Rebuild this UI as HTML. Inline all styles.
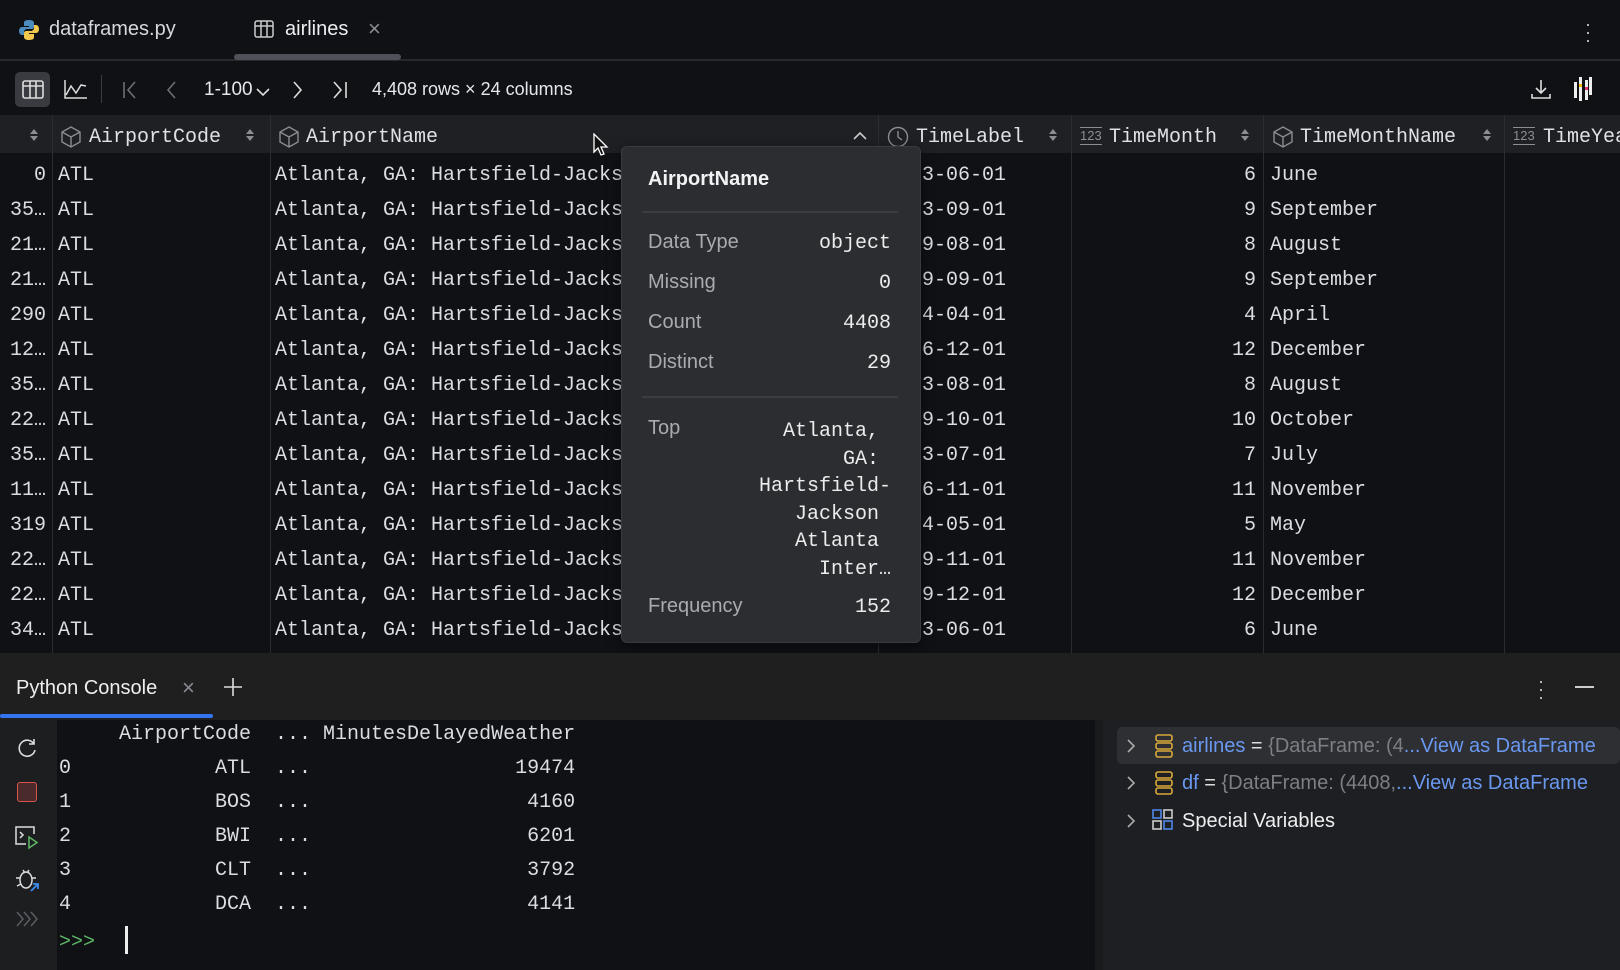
<!DOCTYPE html>
<html><head><meta charset="utf-8"><style>
*{margin:0;padding:0;box-sizing:border-box}
body{width:1620px;height:970px;overflow:hidden;background:#0f1115;color:#dfe1e5;font-family:"Liberation Sans",sans-serif;position:relative}
.a{position:absolute;white-space:nowrap}
.m{font-family:"Liberation Mono",monospace}
.row{position:absolute;left:0;width:1620px;height:35px;font-family:"Liberation Mono",monospace;font-size:20px;line-height:35px;color:#dcdde0}
.row span{position:absolute;white-space:nowrap}
.vl{position:absolute;top:115px;width:1px;height:538px;background:#2b2d30}
.hd{font-family:"Liberation Mono",monospace;font-size:20px;color:#dfe1e5}
.sort{position:absolute;top:128px}
.tl{position:absolute;left:26px;font-size:20px;color:#a9abb0}
.tv{position:absolute;right:26px;font-family:"Liberation Mono",monospace;font-size:20px;color:#ececec;text-align:right}
.cl{position:absolute;left:59px;font-family:"Liberation Mono",monospace;font-size:20px;color:#dcdde0;white-space:pre;line-height:34px}
</style></head><body>
<!-- tabs -->
<div class="a" style="left:0;top:0;width:1620px;height:61px;background:#0f1115;border-bottom:2px solid #26282c"></div>
<svg class="a" style="left:18px;top:19px" width="22" height="22" viewBox="0 0 22 22"><path d="M11 1c-5 0-5 2-5 3v3h5v1H4C2 8 1 10 1 12s1 4 3 4h2v-3c0-2 2-3 3-3h5c1 0 2-1 2-2V4c0-2-2-3-5-3z" fill="#4b8bbe"/><path d="M11 21c5 0 5-2 5-3v-3h-5v-1h7c2 0 3-2 3-4s-1-4-3-4h-2v3c0 2-2 3-3 3H8c-1 0-2 1-2 2v4c0 2 2 3 5 3z" fill="#f2c94c"/></svg>
<div class="a" style="left:49px;top:18px;font-size:20px;color:#d6d8dc">dataframes.py</div>
<svg class="a" style="left:254px;top:20px" width="20" height="18" viewBox="0 0 20 18"><rect x="1" y="1" width="18" height="16" rx="2" fill="none" stroke="#ccc" stroke-width="1.5"/><path d="M1 6h18M7 1v16M13 1v16" stroke="#ccc" stroke-width="1.5"/></svg>
<div class="a" style="left:285px;top:18px;font-size:20px;color:#eceef0">airlines</div>
<div class="a" style="left:368px;top:16px;font-size:22px;color:#8a8d93">×</div>
<div class="a" style="left:234px;top:54px;width:167px;height:6px;border-radius:3px;background:#4e5157"></div>
<div class="a" style="left:1585px;top:20px;width:4px;height:26px;color:#ccc;font-size:18px;line-height:8px">·<br>·<br>·</div>
<!-- toolbar -->
<div class="a" style="left:15px;top:72px;width:35px;height:35px;border-radius:5px;background:#393b40"></div>
<svg class="a" style="left:22px;top:80px" width="22" height="19" viewBox="0 0 22 19"><rect x="1" y="1" width="20" height="17" rx="2" fill="none" stroke="#ddd" stroke-width="1.6"/><path d="M1 6h20M8 1v17M14 1v17" stroke="#ddd" stroke-width="1.6"/></svg>
<svg class="a" style="left:64px;top:79px" width="24" height="20" viewBox="0 0 24 20"><path d="M1 1v18h22M2 16l5-9 5 7 5-8 5 1" fill="none" stroke="#ddd" stroke-width="1.5"/></svg>
<div class="a" style="left:101px;top:75px;width:1px;height:28px;background:#3a3c40"></div>
<svg class="a" style="left:122px;top:80px" width="16" height="20" viewBox="0 0 16 20"><path d="M2 2v16M13 2l-7 8 7 8" fill="none" stroke="#6b6e74" stroke-width="1.6"/></svg>
<svg class="a" style="left:165px;top:80px" width="12" height="20" viewBox="0 0 12 20"><path d="M10 2l-7 8 7 8" fill="none" stroke="#6b6e74" stroke-width="1.6"/></svg>
<div class="a" style="left:204px;top:79px;font-size:19px;color:#e6e7ea">1-100</div>
<svg class="a" style="left:256px;top:88px" width="14" height="9" viewBox="0 0 14 9"><path d="M1 1l6 6 6-6" fill="none" stroke="#ddd" stroke-width="1.6"/></svg>
<svg class="a" style="left:292px;top:80px" width="12" height="20" viewBox="0 0 12 20"><path d="M2 2l7 8-7 8" fill="none" stroke="#ddd" stroke-width="1.6"/></svg>
<svg class="a" style="left:332px;top:80px" width="16" height="20" viewBox="0 0 16 20"><path d="M2 2l7 8-7 8M14 2v16" fill="none" stroke="#ddd" stroke-width="1.6"/></svg>
<div class="a" style="left:372px;top:79px;font-size:18px;color:#e6e7ea">4,408 rows × 24 columns</div>
<svg class="a" style="left:1530px;top:78px" width="22" height="22" viewBox="0 0 22 22"><path d="M11 2v13M6 10l5 5 5-5M2 16v4h18v-4" fill="none" stroke="#ddd" stroke-width="1.6"/></svg>
<svg class="a" style="left:1573px;top:76px" width="20" height="26" viewBox="0 0 20 26"><rect x="1" y="6" width="3" height="16" fill="#eee"/><rect x="6" y="1" width="3" height="24" fill="#eee"/><rect x="12" y="4" width="3" height="20" fill="#eee"/><rect x="16" y="1" width="3" height="18" fill="#eee"/><rect x="6" y="8" width="3" height="3" fill="#f0c000"/><rect x="12" y="11" width="3" height="3" fill="#e0306a"/></svg>
<!-- header -->
<div class="a" style="left:0;top:115px;width:1620px;height:38px;background:#1f2023"></div>
<svg class="sort" style="left:29px" width="10" height="14" viewBox="0 0 10 14"><path d="M5 1l4 5H1zM5 13l4-5H1z" fill="#8a8d93"/></svg>
<svg class="a" style="left:60px;top:126px" width="22" height="22" viewBox="0 0 22 22"><path d="M11 1l9 5v10l-9 5-9-5V6zM2 6l9 5 9-5M11 11v10" fill="none" stroke="#8a8d93" stroke-width="1.4"/></svg>
<div class="a hd" style="left:89px;top:126px">AirportCode</div>
<svg class="sort" style="left:245px" width="10" height="14" viewBox="0 0 10 14"><path d="M5 1l4 5H1zM5 13l4-5H1z" fill="#8a8d93"/></svg>
<svg class="a" style="left:278px;top:126px" width="22" height="22" viewBox="0 0 22 22"><path d="M11 1l9 5v10l-9 5-9-5V6zM2 6l9 5 9-5M11 11v10" fill="none" stroke="#8a8d93" stroke-width="1.4"/></svg>
<div class="a hd" style="left:306px;top:126px">AirportName</div>
<svg class="a" style="left:853px;top:131px" width="14" height="9" viewBox="0 0 14 9"><path d="M1 8l6-6 6 6" fill="none" stroke="#ccc" stroke-width="1.6"/></svg>
<svg class="a" style="left:887px;top:126px" width="22" height="22" viewBox="0 0 22 22"><circle cx="11" cy="11" r="9.5" fill="none" stroke="#8a8d93" stroke-width="1.4"/><path d="M11 5v6l4 3" fill="none" stroke="#8a8d93" stroke-width="1.4"/></svg>
<div class="a hd" style="left:916px;top:126px">TimeLabel</div>
<svg class="sort" style="left:1048px" width="10" height="14" viewBox="0 0 10 14"><path d="M5 1l4 5H1zM5 13l4-5H1z" fill="#8a8d93"/></svg>
<div class="a" style="left:1080px;top:127px;font-size:13px;color:#8a8d93;border-top:1px solid #8a8d93;border-bottom:1px solid #8a8d93;line-height:16px">123</div>
<div class="a hd" style="left:1109px;top:126px">TimeMonth</div>
<svg class="sort" style="left:1240px" width="10" height="14" viewBox="0 0 10 14"><path d="M5 1l4 5H1zM5 13l4-5H1z" fill="#8a8d93"/></svg>
<svg class="a" style="left:1272px;top:126px" width="22" height="22" viewBox="0 0 22 22"><path d="M11 1l9 5v10l-9 5-9-5V6zM2 6l9 5 9-5M11 11v10" fill="none" stroke="#8a8d93" stroke-width="1.4"/></svg>
<div class="a hd" style="left:1300px;top:126px">TimeMonthName</div>
<svg class="sort" style="left:1482px" width="10" height="14" viewBox="0 0 10 14"><path d="M5 1l4 5H1zM5 13l4-5H1z" fill="#8a8d93"/></svg>
<div class="a" style="left:1513px;top:127px;font-size:13px;color:#8a8d93;border-top:1px solid #8a8d93;border-bottom:1px solid #8a8d93;line-height:16px">123</div>
<div class="a hd" style="left:1543px;top:126px">TimeYear</div>
<div class="vl" style="left:52px"></div><div class="vl" style="left:270px"></div><div class="vl" style="left:878px"></div><div class="vl" style="left:1071px"></div><div class="vl" style="left:1263px"></div><div class="vl" style="left:1504px"></div>
<!-- rows -->
<div class="row" style="top:158px"><span style="right:1574px">0</span><span style="left:58px">ATL</span><span style="left:275px">Atlanta, GA: Hartsfield-Jackson</span><span style="left:886px">2003-06-01</span><span style="right:364px">6</span><span style="left:1270px">June</span></div>
<div class="row" style="top:193px"><span style="right:1574px">35…</span><span style="left:58px">ATL</span><span style="left:275px">Atlanta, GA: Hartsfield-Jackson</span><span style="left:886px">2003-09-01</span><span style="right:364px">9</span><span style="left:1270px">September</span></div>
<div class="row" style="top:228px"><span style="right:1574px">21…</span><span style="left:58px">ATL</span><span style="left:275px">Atlanta, GA: Hartsfield-Jackson</span><span style="left:886px">2009-08-01</span><span style="right:364px">8</span><span style="left:1270px">August</span></div>
<div class="row" style="top:263px"><span style="right:1574px">21…</span><span style="left:58px">ATL</span><span style="left:275px">Atlanta, GA: Hartsfield-Jackson</span><span style="left:886px">2009-09-01</span><span style="right:364px">9</span><span style="left:1270px">September</span></div>
<div class="row" style="top:298px"><span style="right:1574px">290</span><span style="left:58px">ATL</span><span style="left:275px">Atlanta, GA: Hartsfield-Jackson</span><span style="left:886px">2004-04-01</span><span style="right:364px">4</span><span style="left:1270px">April</span></div>
<div class="row" style="top:333px"><span style="right:1574px">12…</span><span style="left:58px">ATL</span><span style="left:275px">Atlanta, GA: Hartsfield-Jackson</span><span style="left:886px">2006-12-01</span><span style="right:364px">12</span><span style="left:1270px">December</span></div>
<div class="row" style="top:368px"><span style="right:1574px">35…</span><span style="left:58px">ATL</span><span style="left:275px">Atlanta, GA: Hartsfield-Jackson</span><span style="left:886px">2003-08-01</span><span style="right:364px">8</span><span style="left:1270px">August</span></div>
<div class="row" style="top:403px"><span style="right:1574px">22…</span><span style="left:58px">ATL</span><span style="left:275px">Atlanta, GA: Hartsfield-Jackson</span><span style="left:886px">2009-10-01</span><span style="right:364px">10</span><span style="left:1270px">October</span></div>
<div class="row" style="top:438px"><span style="right:1574px">35…</span><span style="left:58px">ATL</span><span style="left:275px">Atlanta, GA: Hartsfield-Jackson</span><span style="left:886px">2003-07-01</span><span style="right:364px">7</span><span style="left:1270px">July</span></div>
<div class="row" style="top:473px"><span style="right:1574px">11…</span><span style="left:58px">ATL</span><span style="left:275px">Atlanta, GA: Hartsfield-Jackson</span><span style="left:886px">2006-11-01</span><span style="right:364px">11</span><span style="left:1270px">November</span></div>
<div class="row" style="top:508px"><span style="right:1574px">319</span><span style="left:58px">ATL</span><span style="left:275px">Atlanta, GA: Hartsfield-Jackson</span><span style="left:886px">2004-05-01</span><span style="right:364px">5</span><span style="left:1270px">May</span></div>
<div class="row" style="top:543px"><span style="right:1574px">22…</span><span style="left:58px">ATL</span><span style="left:275px">Atlanta, GA: Hartsfield-Jackson</span><span style="left:886px">2009-11-01</span><span style="right:364px">11</span><span style="left:1270px">November</span></div>
<div class="row" style="top:578px"><span style="right:1574px">22…</span><span style="left:58px">ATL</span><span style="left:275px">Atlanta, GA: Hartsfield-Jackson</span><span style="left:886px">2009-12-01</span><span style="right:364px">12</span><span style="left:1270px">December</span></div>
<div class="row" style="top:613px"><span style="right:1574px">34…</span><span style="left:58px">ATL</span><span style="left:275px">Atlanta, GA: Hartsfield-Jackson</span><span style="left:886px">2003-06-01</span><span style="right:364px">6</span><span style="left:1270px">June</span></div>
<!-- tooltip -->
<div class="a" style="left:621px;top:146px;width:300px;height:497px;background:#2b2d30;border:1px solid #393b40;border-radius:6px;box-shadow:0 4px 14px rgba(0,0,0,.5)">
 <div class="a" style="left:26px;top:21px;font-size:20px;font-weight:bold;color:#f2f3f5">AirportName</div>
 <div class="a" style="left:20px;top:64px;width:256px;height:2px;background:#3a3c41"></div>
 <div class="tl" style="top:84px">Data Type</div><div class="tv" style="top:85px;right:29px">object</div>
 <div class="tl" style="top:124px">Missing</div><div class="tv" style="top:125px;right:29px">0</div>
 <div class="tl" style="top:164px">Count</div><div class="tv" style="top:165px;right:29px">4408</div>
 <div class="tl" style="top:204px">Distinct</div><div class="tv" style="top:205px;right:29px">29</div>
 <div class="a" style="left:20px;top:249px;width:256px;height:2px;background:#3a3c41"></div>
 <div class="tl" style="top:270px">Top</div>
 <div class="tv" style="top:271px;right:29px;line-height:27.5px;white-space:pre">Atlanta, 
GA: 
Hartsfield-
Jackson 
Atlanta 
Inter…</div>
 <div class="tl" style="top:448px">Frequency</div><div class="tv" style="top:449px;right:29px">152</div>
</div>
<!-- cursor -->
<svg class="a" style="left:593px;top:133px" width="16" height="24" viewBox="0 0 16 24"><path d="M1 1v18l4-4 3 7 3-1-3-7h6z" fill="#111" stroke="#fff" stroke-width="1.3"/></svg>
<!-- console -->
<div class="a" style="left:0;top:653px;width:1620px;height:67px;background:#1f1f1f"></div>
<div class="a" style="left:16px;top:677px;font-size:20px;color:#eceef0">Python Console</div>
<div class="a" style="left:182px;top:675px;font-size:22px;color:#8a8d93">×</div>
<svg class="a" style="left:223px;top:677px" width="20" height="20" viewBox="0 0 20 20"><path d="M10 1v18M1 10h18" stroke="#ddd" stroke-width="1.6"/></svg>
<div class="a" style="left:0;top:714px;width:213px;height:4px;background:#3574f0;border-radius:2px"></div>
<div class="a" style="left:1538px;top:677px;font-size:18px;color:#ccc;line-height:8px">·<br>·<br>·</div>
<div class="a" style="left:1575px;top:686px;width:19px;height:2px;background:#ccc"></div>
<div class="a" style="left:0;top:720px;width:57px;height:250px;background:#1d1e20"></div>
<svg class="a" style="left:15px;top:736px" width="24" height="24" viewBox="0 0 24 24"><path d="M19 8A8 8 0 1 0 20 14M19 3v5h-5" fill="none" stroke="#ddd" stroke-width="1.6"/></svg>
<div class="a" style="left:17px;top:782px;width:20px;height:20px;border:1.5px solid #d9534f;border-radius:3px;background:#4a2a2a"></div>
<svg class="a" style="left:14px;top:824px" width="26" height="26" viewBox="0 0 26 26"><path d="M20 10V3H2v17h10" fill="none" stroke="#ddd" stroke-width="1.5"/><path d="M6 8l3 3-3 3" fill="none" stroke="#ddd" stroke-width="1.5"/><path d="M15 13v11l8-5.5z" fill="none" stroke="#5fb865" stroke-width="1.5"/></svg>
<svg class="a" style="left:14px;top:866px" width="26" height="26" viewBox="0 0 26 26"><ellipse cx="12" cy="14" rx="6" ry="8" fill="none" stroke="#ddd" stroke-width="1.5"/><path d="M2 12h4M18 12h4M3 20l4-2M9 4l2 3M15 4l-2 3" stroke="#ddd" stroke-width="1.5"/><path d="M17 25l7-7M19 18h5v5" fill="none" stroke="#3d8bf2" stroke-width="1.8"/></svg>
<svg class="a" style="left:16px;top:911px" width="22" height="16" viewBox="0 0 22 16"><path d="M1 1l6 7-6 7M8 1l6 7-6 7M15 1l6 7-6 7" fill="none" stroke="#5a5d63" stroke-width="1.5"/></svg>
<div class="cl" style="top:718px">     AirportCode  ... MinutesDelayedWeather
0            ATL  ...                 19474
1            BOS  ...                  4160
2            BWI  ...                  6201
3            CLT  ...                  3792
4            DCA  ...                  4141</div>
<div class="a m" style="left:59px;top:931px;font-size:20px;color:#5fb865">&gt;&gt;&gt;</div>
<div class="a" style="left:125px;top:926px;width:3px;height:28px;background:#eee"></div>
<!-- variables -->
<div class="a" style="left:1095px;top:720px;width:8px;height:250px;background:#1a1b1d"></div>
<div class="a" style="left:1103px;top:720px;width:517px;height:250px;background:#1e1f22"></div>
<div class="a" style="left:1117px;top:727px;width:503px;height:37px;background:#2d2f33;border-radius:5px"></div>
<svg class="a" style="left:1126px;top:738px" width="10" height="16" viewBox="0 0 10 16"><path d="M2 2l6 6-6 6" fill="none" stroke="#aaa" stroke-width="1.6"/></svg>
<svg class="a" style="left:1126px;top:775px" width="10" height="16" viewBox="0 0 10 16"><path d="M2 2l6 6-6 6" fill="none" stroke="#aaa" stroke-width="1.6"/></svg>
<svg class="a" style="left:1126px;top:813px" width="10" height="16" viewBox="0 0 10 16"><path d="M2 2l6 6-6 6" fill="none" stroke="#aaa" stroke-width="1.6"/></svg>
<svg class="a" style="left:1155px;top:734px" width="18" height="24" viewBox="0 0 18 24"><rect x="1" y="1" width="16" height="6" rx="2" fill="none" stroke="#d9a93a" stroke-width="1.6"/><rect x="1" y="9" width="16" height="6" rx="2" fill="none" stroke="#d9a93a" stroke-width="1.6"/><rect x="1" y="17" width="16" height="6" rx="2" fill="none" stroke="#d9a93a" stroke-width="1.6"/></svg>
<svg class="a" style="left:1155px;top:771px" width="18" height="24" viewBox="0 0 18 24"><rect x="1" y="1" width="16" height="6" rx="2" fill="none" stroke="#d9a93a" stroke-width="1.6"/><rect x="1" y="9" width="16" height="6" rx="2" fill="none" stroke="#d9a93a" stroke-width="1.6"/><rect x="1" y="17" width="16" height="6" rx="2" fill="none" stroke="#d9a93a" stroke-width="1.6"/></svg>
<svg class="a" style="left:1152px;top:809px" width="22" height="22" viewBox="0 0 22 22"><rect x="1" y="1" width="8" height="8" fill="none" stroke="#4f86e8" stroke-width="1.6"/><rect x="12" y="1" width="8" height="8" fill="none" stroke="#ccc" stroke-width="1.6"/><rect x="1" y="12" width="8" height="8" fill="none" stroke="#ccc" stroke-width="1.6"/><rect x="12" y="12" width="8" height="8" fill="none" stroke="#4f86e8" stroke-width="1.6"/></svg>
<div class="a" style="left:1182px;top:735px;font-size:20px;color:#6a98f0">airlines <span style="color:#ddd">=</span> <span style="color:#7c7f85">{DataFrame: (4</span>...View as DataFrame</div>
<div class="a" style="left:1182px;top:772px;font-size:20px;color:#6a98f0">df <span style="color:#ddd">=</span> <span style="color:#7c7f85">{DataFrame: (4408,</span>...View as DataFrame</div>
<div class="a" style="left:1182px;top:810px;font-size:20px;color:#eceef0">Special Variables</div>
</body></html>
